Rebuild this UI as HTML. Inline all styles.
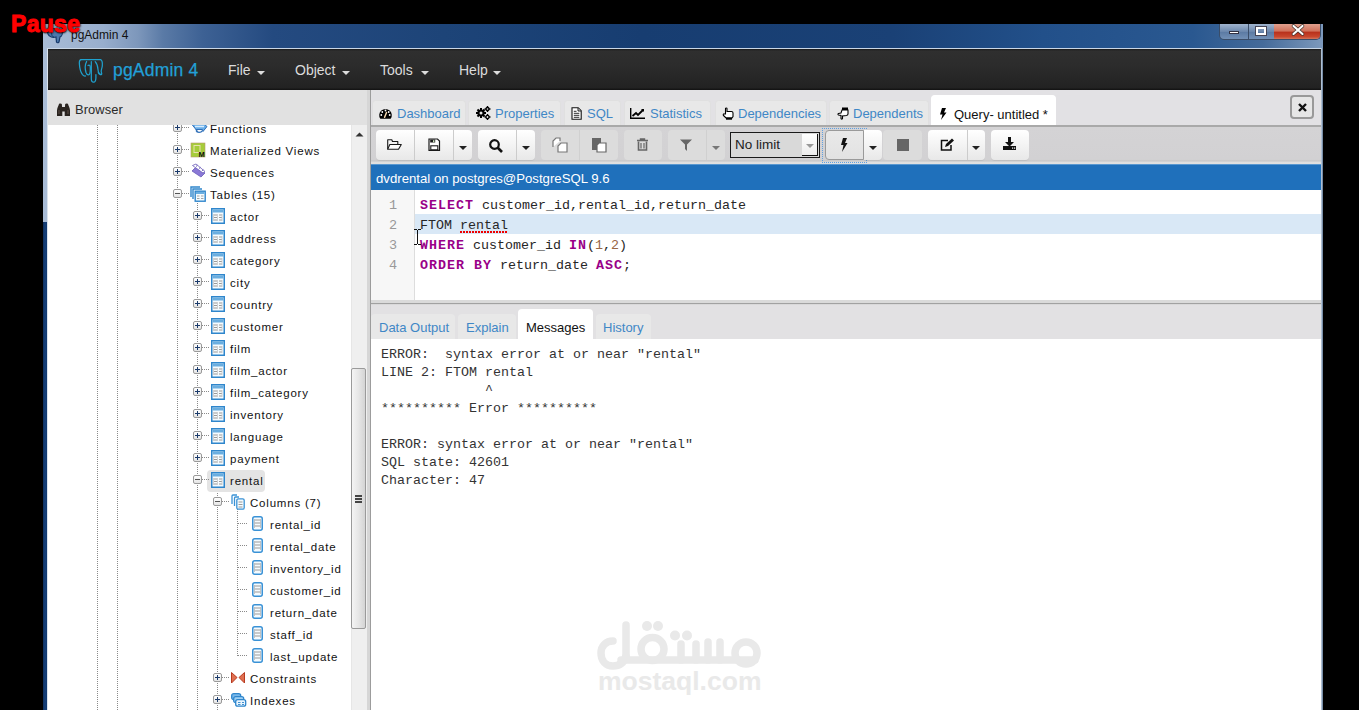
<!DOCTYPE html><html><head><meta charset="utf-8"><style>
*{box-sizing:border-box;margin:0;padding:0}
html,body{width:1359px;height:710px;overflow:hidden;background:#000;font-family:"Liberation Sans",sans-serif}
.a{position:absolute}
svg{position:absolute;overflow:visible}
#pause{left:11px;top:7px;font-size:23px;font-weight:bold;color:#f00;letter-spacing:0.3px;z-index:50;line-height:30px;transform:scaleY(1.08);transform-origin:0 0;-webkit-text-stroke:0.9px #f00;text-shadow:0 0 2px #000,0 0 2px #000,1px 1px 2px #000}
#win{left:43px;top:24px;width:1280px;height:700px;background:linear-gradient(90deg,#a9bcd6 0px,#98aecd 60px,#7d97bb 95px,#5a7aa6 120px,#3d6194 160px,#244a80 230px,#1d4478 400px,#173d71 600px,#1a4176 850px,#22508a 1000px,#2a5890 1150px,#456b9a 1220px,#7d99bc 1280px)}
#wtitle{left:71px;top:28px;font-size:12px;color:#111;line-height:14px}
#inner{left:47px;top:48px;width:1276px;height:662px;background:#e0e0e0;border-left:1px solid #dbe4ee;border-top:1px solid #c9d6e6}
#nav{left:48px;top:49px;width:1273px;height:41px;background:linear-gradient(#1a1a1a 0,#2f2f2f 2px,#2c2c2c 40%,#222 94%,#111 100%)}
.menu{top:62px;font-size:14px;color:#dcdcdc;line-height:16px}
.caret{width:0;height:0;border-left:4px solid transparent;border-right:4px solid transparent;border-top:4px solid #dcdcdc}
#brand{left:113px;top:60px;font-size:17.5px;color:#22a0d8;line-height:20px;letter-spacing:0.2px;-webkit-text-stroke:0.25px #22a0d8}
#bhead{left:48px;top:90px;width:320px;height:35px;background:#e1e1e1}
#btxt{left:75px;top:102px;font-size:12.9px;color:#2a2a2a;line-height:15px;letter-spacing:0.1px}
#tree{left:48px;top:125px;width:303px;height:585px;background:#fff;overflow:hidden}
#sb{left:351px;top:125px;width:16px;height:585px;background:#efefef;border-left:1px solid #e6e6e6}
#psep{left:367px;top:90px;width:4px;height:620px;background:#d6d6d6}
#psep2{left:370px;top:90px;width:1px;height:620px;background:#9c9c9c}
#tabbar{left:371px;top:90px;width:950px;height:35px;background:#e2e1e4}
#tbline{left:371px;top:125px;width:950px;height:2px;background:#a9a9a9}
#toolbar{left:371px;top:127px;width:950px;height:36px;background:linear-gradient(#d4d3d5,#d2d1d3 90%,#c9c9c9 94%,#e6e6e6)}
#bluebar{left:371px;top:164px;width:950px;height:26px;background:#1f70bb;border-top:1px solid #5a98d0}
#bluetxt{left:376px;top:171px;font-size:13.2px;color:#fff;line-height:15px}
#editor{left:371px;top:190px;width:950px;height:110px;background:#fff}
#gutter{left:371px;top:190px;width:44px;height:110px;background:#f7f7f7;border-right:1px solid #ddd}
#splitter{left:371px;top:300px;width:950px;height:5px;background:linear-gradient(#dadada 0,#dadada 3px,#9a9a9a 3px,#a8a8a8 4px,#d0d0d0 4px,#e2e1e3 5px)}
#otabbar{left:371px;top:305px;width:950px;height:34px;background:#e2e1e3}
#out{left:371px;top:339px;width:950px;height:371px;background:#fff}
#wframeR{left:1321px;top:48px;width:2px;height:662px;background:linear-gradient(90deg,#c8d6e6,#5d7592)}
.tab{position:absolute;top:100px;height:25px;background:#e8e8e8;border-radius:4px 4px 0 0;border:1px solid #e0e0e0;border-bottom:none}
.tabt{position:absolute;top:106px;font-size:13px;color:#3f87c6;line-height:15px;white-space:nowrap}
.ln{position:absolute;left:371px;width:26px;text-align:right;font-family:"Liberation Mono",monospace;font-size:13.5px;color:#999;line-height:20px;height:20px}
.cl{position:absolute;left:420px;font-family:"Liberation Mono",monospace;font-size:13.33px;color:#262626;line-height:20px;height:20px;white-space:pre}
.kw{color:#908;font-weight:bold;letter-spacing:1px}
.nm{color:#964}
#hl{left:415px;top:214px;width:906px;height:20px;background:#d9e8f6}
.msg{position:absolute;left:381px;margin-top:1px;font-family:"Liberation Mono",monospace;font-size:13.33px;color:#333;line-height:18px;white-space:pre}
#squig{left:460px;top:231px;width:47px;height:2px;background-image:repeating-linear-gradient(90deg,#e00 0 2px,transparent 2px 3px)}
.btn{position:absolute;top:130px;height:30px;border-radius:4px;background:linear-gradient(#ffffff,#e8e8e8);box-shadow:0 1px 0 rgba(0,0,0,0.06)}
.btnd{position:absolute;top:130px;height:30px;border-radius:4px;background:#dcdcdc}
.div{position:absolute;top:130px;width:1px;height:30px;background:#cfcfcf}
.tc{position:absolute;width:0;height:0;border-left:4px solid transparent;border-right:4px solid transparent;border-top:4px solid #222}
.tr{position:absolute;font-size:11.5px;letter-spacing:0.8px;color:#111;line-height:14px;white-space:nowrap}
.vd{position:absolute;width:1px;background-image:repeating-linear-gradient(180deg,#8a8a8a 0 1px,transparent 1px 2px)}
.hd{position:absolute;height:1px;background-image:repeating-linear-gradient(90deg,#8a8a8a 0 1px,transparent 1px 2px)}
.exp{position:absolute;width:9px;height:9px;border:1px solid #9a9a9a;border-radius:2px;background:linear-gradient(#fff,#e4e4e4)}
.otab{position:absolute;top:314px;height:25px;background:#e8e8e8;border-radius:4px 4px 0 0}
.otabt{position:absolute;top:320px;font-size:13px;color:#3f87c6;line-height:15px;white-space:nowrap}
</style></head><body>
<div id="pause" class="a">Pause</div>
<div id="win" class="a"></div>
<svg style="left:45px;top:27px" width="20" height="18" viewBox="0 0 20 18"><path d="M2 3C4 1 15 1 17 3C18 6 17 9 15 10L14 15C13 16 12 16 11.5 15L11 10C8 11 4 10 3 7z" fill="#4d79ad" stroke="#17396a" stroke-width="1.2"/><path d="M7 4C6 7 7 10 9 10" fill="none" stroke="#17396a" stroke-width="1"/></svg>
<div id="wtitle" class="a">pgAdmin 4</div>
<div class="a" style="left:1219px;top:24px;width:102px;height:16px;border:1px solid #3a4d68;border-top:none;border-radius:0 0 5px 5px;background:linear-gradient(#9fb3cd,#6c88ad 50%,#5a79a2 51%,#7290b6);overflow:hidden"><div class="a" style="left:28px;top:0;width:1px;height:16px;background:#3a4d68"></div><div class="a" style="left:54px;top:0;width:56px;height:16px;background:linear-gradient(#e0a08e,#d0715a 45%,#b8301b 50%,#c8482e 80%,#d98c72)"></div><div class="a" style="left:9px;top:7px;width:10px;height:3px;background:#fff;border:1px solid #334;"></div><div class="a" style="left:36px;top:3px;width:10px;height:8px;border:2px solid #fff;outline:1px solid #445"></div></div>
<svg style="left:1292px;top:25px" width="12" height="10" viewBox="0 0 12 10"><path d="M1.5 1L10.5 9M10.5 1L1.5 9" stroke="#40302a" stroke-width="3.6" stroke-linecap="round"/><path d="M1.5 1L10.5 9M10.5 1L1.5 9" stroke="#fff" stroke-width="2.2" stroke-linecap="round"/></svg>
<div class="a" style="left:43px;top:222px;width:4px;height:488px;background:linear-gradient(90deg,#0f2f5c,#15407a 50%,#12376b)"></div>
<div class="a" style="left:47px;top:222px;width:1px;height:488px;background:#a3b8d2"></div>
<div id="inner" class="a"></div>
<div id="nav" class="a"></div>
<svg style="left:74px;top:55px" width="34" height="32" viewBox="0 0 34 32"><g fill="none" stroke="#1fa2cf" stroke-width="1.25" stroke-linecap="round" stroke-linejoin="round"><path d="M7 4.6C5.5 5 5.2 7 5.4 9C5.6 13 6.5 17 8.5 19.6C9.5 20.8 10.5 21.2 11.5 21"/><path d="M7 4.6H26.5C28 5 28.6 7.5 28.3 11C28 13.5 27 15 27.2 16.5C27.4 18 28.2 18.8 27.5 19.5C26.5 20.2 24.8 19 24.3 17.5"/><path d="M12.6 6.5C11.3 9 11 14 12 17.5C12.6 19.3 14 20 15 19.7C16.3 19.2 16.4 16 16.3 12C16.2 10 15 9.8 14 10.5"/><path d="M17.3 6.6V23.5C17.3 26 18.5 27.2 19.6 27.2C21 27.2 21.8 25.5 21.9 23V19.6"/><path d="M21.2 6.6C23 8.5 23.8 11.5 24 14.5C24.2 17 24.5 19 27 19.4"/></g></svg>
<div id="brand" class="a">pgAdmin 4</div>
<div class="a menu" style="left:228px">File</div><div class="a caret" style="left:257px;top:71px"></div>
<div class="a menu" style="left:295px">Object</div><div class="a caret" style="left:342px;top:71px"></div>
<div class="a menu" style="left:380px">Tools</div><div class="a caret" style="left:421px;top:71px"></div>
<div class="a menu" style="left:459px">Help</div><div class="a caret" style="left:493px;top:71px"></div>
<div id="bhead" class="a"></div>
<svg style="left:56px;top:102px" width="15" height="15" viewBox="0 0 15 15"><path d="M1 14V8.5C1 6 2.5 4 3 2C3.2 1.2 5.5 1.2 5.8 2L6.3 7.5V14z" fill="#2a2420"/><path d="M14 14V8.5C14 6 12.5 4 12 2C11.8 1.2 9.5 1.2 9.2 2L8.7 7.5V14z" fill="#2a2420"/><rect x="6" y="5" width="3" height="4.5" fill="#2a2420"/><path d="M3 8V12M12 8V12" stroke="#6a5a50" stroke-width="0.8"/></svg>
<div id="btxt" class="a">Browser</div>
<div id="tree" class="a"></div>
<div id="sb" class="a"></div>
<div id="psep" class="a"></div>
<div id="psep2" class="a"></div>
<div class="a" style="left:48px;top:125px;width:303px;height:585px;overflow:hidden">
<div class="vd" style="left:49px;top:0px;height:585px"></div>
<div class="vd" style="left:69px;top:0px;height:585px"></div>
<div class="vd" style="left:129px;top:0px;height:585px"></div>
<div class="vd" style="left:149px;top:68px;height:517px"></div>
<div class="vd" style="left:169px;top:354px;height:231px"></div>
<div class="vd" style="left:189px;top:376px;height:155px"></div>
<div class="a" style="left:159px;top:345px;width:58px;height:22px;background:#e4e4e4;border-radius:4px"></div>
<div class="hd" style="left:130px;top:2px;width:12px"></div>
<div class="exp" style="left:125px;top:-2px"></div>
<div class="a" style="left:127px;top:2px;width:5px;height:1px;background:#1a3a6a"></div>
<div class="a" style="left:129px;top:0px;width:1px;height:5px;background:#1a3a6a"></div>
<svg style="left:143px;top:-4px" width="17" height="14" viewBox="0 0 17 14"><path d="M1 3.5L5 1.5L5.5 3.5H13L11 1.5L16 5.5L12 10.5L11.5 8.5H5L6.5 10.5z" fill="#6aaee8" stroke="#2f6fb8" stroke-width="1"/><path d="M4 5.5H13" stroke="#d8ecff" stroke-width="1.5"/><path d="M5 9.5C6 12 10 12 11.5 9.5" fill="none" stroke="#2f6fb8" stroke-width="1.3"/></svg>
<div class="tr" style="left:162px;top:-3px">Functions</div>
<div class="hd" style="left:130px;top:24px;width:12px"></div>
<div class="exp" style="left:125px;top:20px"></div>
<div class="a" style="left:127px;top:24px;width:5px;height:1px;background:#1a3a6a"></div>
<div class="a" style="left:129px;top:22px;width:1px;height:5px;background:#1a3a6a"></div>
<svg style="left:143px;top:18px" width="14" height="14" viewBox="0 0 14 14"><rect x="0" y="0" width="14" height="14" fill="#a6cc3a" stroke="#b89a70" stroke-width="0.6"/><rect x="3" y="2.5" width="6" height="7" fill="none" stroke="#e8e0b0" stroke-width="1"/><text x="7.5" y="13.5" font-family="Liberation Sans" font-weight="bold" font-size="7.5" fill="#111">M</text></svg>
<div class="tr" style="left:162px;top:19px">Materialized Views</div>
<div class="hd" style="left:130px;top:46px;width:12px"></div>
<div class="exp" style="left:125px;top:42px"></div>
<div class="a" style="left:127px;top:46px;width:5px;height:1px;background:#1a3a6a"></div>
<div class="a" style="left:129px;top:44px;width:1px;height:5px;background:#1a3a6a"></div>
<svg style="left:143px;top:39px" width="15" height="15" viewBox="0 0 15 15"><path d="M1 7L5 3L14 9L10 13z" fill="#8a78d6" stroke="#6a5cb8" stroke-width="0.8"/><path d="M1.5 1.5L5 0L14 7.5L12 9z" fill="#fff" stroke="#6a5cb8" stroke-width="0.8"/><path d="M5 2.5L6.5 1.2M8 4.5L9.5 3.3M11 6.8L12.3 5.6" stroke="#6a5cb8" stroke-width="1"/></svg>
<div class="tr" style="left:162px;top:41px">Sequences</div>
<div class="hd" style="left:130px;top:68px;width:12px"></div>
<div class="exp" style="left:125px;top:64px"></div>
<div class="a" style="left:127px;top:68px;width:5px;height:1px;background:#555"></div>
<svg style="left:142px;top:61px" width="16" height="16" viewBox="0 0 16 16"><path d="M1 11V1H10" fill="none" stroke="#2f86cc" stroke-width="1.4"/><path d="M3 13V3H12" fill="none" stroke="#2f86cc" stroke-width="1.4"/><rect x="5.2" y="5.2" width="10" height="10" fill="#f4fbff" stroke="#2f86cc" stroke-width="1.4"/><rect x="6" y="6" width="8.5" height="2" fill="#6aaee0"/><path d="M7 10H9.5M11 10H13.5M7 12.5H9.5M11 12.5H13.5" stroke="#9a9a9a" stroke-width="0.9"/></svg>
<div class="tr" style="left:162px;top:63px">Tables (15)</div>
<div class="hd" style="left:150px;top:90px;width:12px"></div>
<div class="exp" style="left:145px;top:86px"></div>
<div class="a" style="left:147px;top:90px;width:5px;height:1px;background:#1a3a6a"></div>
<div class="a" style="left:149px;top:88px;width:1px;height:5px;background:#1a3a6a"></div>
<svg style="left:163px;top:83px" width="14" height="16" viewBox="0 0 14 16"><rect x="0.75" y="0.75" width="12.5" height="14.5" fill="#f4fbff" stroke="#2f86cc" stroke-width="1.5"/><rect x="1.5" y="1.5" width="11" height="3" fill="#6aaee0"/><path d="M3 7H6M3 9.5H6M3 12H6M8 7H11M8 9.5H11M8 12H11" stroke="#9a9a9a" stroke-width="1"/><path d="M6.5 6V13M11 6V13M2.5 6V13" stroke="#c6c6c6" stroke-width="0.8"/></svg>
<div class="tr" style="left:182px;top:85px">actor</div>
<div class="hd" style="left:150px;top:112px;width:12px"></div>
<div class="exp" style="left:145px;top:108px"></div>
<div class="a" style="left:147px;top:112px;width:5px;height:1px;background:#1a3a6a"></div>
<div class="a" style="left:149px;top:110px;width:1px;height:5px;background:#1a3a6a"></div>
<svg style="left:163px;top:105px" width="14" height="16" viewBox="0 0 14 16"><rect x="0.75" y="0.75" width="12.5" height="14.5" fill="#f4fbff" stroke="#2f86cc" stroke-width="1.5"/><rect x="1.5" y="1.5" width="11" height="3" fill="#6aaee0"/><path d="M3 7H6M3 9.5H6M3 12H6M8 7H11M8 9.5H11M8 12H11" stroke="#9a9a9a" stroke-width="1"/><path d="M6.5 6V13M11 6V13M2.5 6V13" stroke="#c6c6c6" stroke-width="0.8"/></svg>
<div class="tr" style="left:182px;top:107px">address</div>
<div class="hd" style="left:150px;top:134px;width:12px"></div>
<div class="exp" style="left:145px;top:130px"></div>
<div class="a" style="left:147px;top:134px;width:5px;height:1px;background:#1a3a6a"></div>
<div class="a" style="left:149px;top:132px;width:1px;height:5px;background:#1a3a6a"></div>
<svg style="left:163px;top:127px" width="14" height="16" viewBox="0 0 14 16"><rect x="0.75" y="0.75" width="12.5" height="14.5" fill="#f4fbff" stroke="#2f86cc" stroke-width="1.5"/><rect x="1.5" y="1.5" width="11" height="3" fill="#6aaee0"/><path d="M3 7H6M3 9.5H6M3 12H6M8 7H11M8 9.5H11M8 12H11" stroke="#9a9a9a" stroke-width="1"/><path d="M6.5 6V13M11 6V13M2.5 6V13" stroke="#c6c6c6" stroke-width="0.8"/></svg>
<div class="tr" style="left:182px;top:129px">category</div>
<div class="hd" style="left:150px;top:156px;width:12px"></div>
<div class="exp" style="left:145px;top:152px"></div>
<div class="a" style="left:147px;top:156px;width:5px;height:1px;background:#1a3a6a"></div>
<div class="a" style="left:149px;top:154px;width:1px;height:5px;background:#1a3a6a"></div>
<svg style="left:163px;top:149px" width="14" height="16" viewBox="0 0 14 16"><rect x="0.75" y="0.75" width="12.5" height="14.5" fill="#f4fbff" stroke="#2f86cc" stroke-width="1.5"/><rect x="1.5" y="1.5" width="11" height="3" fill="#6aaee0"/><path d="M3 7H6M3 9.5H6M3 12H6M8 7H11M8 9.5H11M8 12H11" stroke="#9a9a9a" stroke-width="1"/><path d="M6.5 6V13M11 6V13M2.5 6V13" stroke="#c6c6c6" stroke-width="0.8"/></svg>
<div class="tr" style="left:182px;top:151px">city</div>
<div class="hd" style="left:150px;top:178px;width:12px"></div>
<div class="exp" style="left:145px;top:174px"></div>
<div class="a" style="left:147px;top:178px;width:5px;height:1px;background:#1a3a6a"></div>
<div class="a" style="left:149px;top:176px;width:1px;height:5px;background:#1a3a6a"></div>
<svg style="left:163px;top:171px" width="14" height="16" viewBox="0 0 14 16"><rect x="0.75" y="0.75" width="12.5" height="14.5" fill="#f4fbff" stroke="#2f86cc" stroke-width="1.5"/><rect x="1.5" y="1.5" width="11" height="3" fill="#6aaee0"/><path d="M3 7H6M3 9.5H6M3 12H6M8 7H11M8 9.5H11M8 12H11" stroke="#9a9a9a" stroke-width="1"/><path d="M6.5 6V13M11 6V13M2.5 6V13" stroke="#c6c6c6" stroke-width="0.8"/></svg>
<div class="tr" style="left:182px;top:173px">country</div>
<div class="hd" style="left:150px;top:200px;width:12px"></div>
<div class="exp" style="left:145px;top:196px"></div>
<div class="a" style="left:147px;top:200px;width:5px;height:1px;background:#1a3a6a"></div>
<div class="a" style="left:149px;top:198px;width:1px;height:5px;background:#1a3a6a"></div>
<svg style="left:163px;top:193px" width="14" height="16" viewBox="0 0 14 16"><rect x="0.75" y="0.75" width="12.5" height="14.5" fill="#f4fbff" stroke="#2f86cc" stroke-width="1.5"/><rect x="1.5" y="1.5" width="11" height="3" fill="#6aaee0"/><path d="M3 7H6M3 9.5H6M3 12H6M8 7H11M8 9.5H11M8 12H11" stroke="#9a9a9a" stroke-width="1"/><path d="M6.5 6V13M11 6V13M2.5 6V13" stroke="#c6c6c6" stroke-width="0.8"/></svg>
<div class="tr" style="left:182px;top:195px">customer</div>
<div class="hd" style="left:150px;top:222px;width:12px"></div>
<div class="exp" style="left:145px;top:218px"></div>
<div class="a" style="left:147px;top:222px;width:5px;height:1px;background:#1a3a6a"></div>
<div class="a" style="left:149px;top:220px;width:1px;height:5px;background:#1a3a6a"></div>
<svg style="left:163px;top:215px" width="14" height="16" viewBox="0 0 14 16"><rect x="0.75" y="0.75" width="12.5" height="14.5" fill="#f4fbff" stroke="#2f86cc" stroke-width="1.5"/><rect x="1.5" y="1.5" width="11" height="3" fill="#6aaee0"/><path d="M3 7H6M3 9.5H6M3 12H6M8 7H11M8 9.5H11M8 12H11" stroke="#9a9a9a" stroke-width="1"/><path d="M6.5 6V13M11 6V13M2.5 6V13" stroke="#c6c6c6" stroke-width="0.8"/></svg>
<div class="tr" style="left:182px;top:217px">film</div>
<div class="hd" style="left:150px;top:244px;width:12px"></div>
<div class="exp" style="left:145px;top:240px"></div>
<div class="a" style="left:147px;top:244px;width:5px;height:1px;background:#1a3a6a"></div>
<div class="a" style="left:149px;top:242px;width:1px;height:5px;background:#1a3a6a"></div>
<svg style="left:163px;top:237px" width="14" height="16" viewBox="0 0 14 16"><rect x="0.75" y="0.75" width="12.5" height="14.5" fill="#f4fbff" stroke="#2f86cc" stroke-width="1.5"/><rect x="1.5" y="1.5" width="11" height="3" fill="#6aaee0"/><path d="M3 7H6M3 9.5H6M3 12H6M8 7H11M8 9.5H11M8 12H11" stroke="#9a9a9a" stroke-width="1"/><path d="M6.5 6V13M11 6V13M2.5 6V13" stroke="#c6c6c6" stroke-width="0.8"/></svg>
<div class="tr" style="left:182px;top:239px">film_actor</div>
<div class="hd" style="left:150px;top:266px;width:12px"></div>
<div class="exp" style="left:145px;top:262px"></div>
<div class="a" style="left:147px;top:266px;width:5px;height:1px;background:#1a3a6a"></div>
<div class="a" style="left:149px;top:264px;width:1px;height:5px;background:#1a3a6a"></div>
<svg style="left:163px;top:259px" width="14" height="16" viewBox="0 0 14 16"><rect x="0.75" y="0.75" width="12.5" height="14.5" fill="#f4fbff" stroke="#2f86cc" stroke-width="1.5"/><rect x="1.5" y="1.5" width="11" height="3" fill="#6aaee0"/><path d="M3 7H6M3 9.5H6M3 12H6M8 7H11M8 9.5H11M8 12H11" stroke="#9a9a9a" stroke-width="1"/><path d="M6.5 6V13M11 6V13M2.5 6V13" stroke="#c6c6c6" stroke-width="0.8"/></svg>
<div class="tr" style="left:182px;top:261px">film_category</div>
<div class="hd" style="left:150px;top:288px;width:12px"></div>
<div class="exp" style="left:145px;top:284px"></div>
<div class="a" style="left:147px;top:288px;width:5px;height:1px;background:#1a3a6a"></div>
<div class="a" style="left:149px;top:286px;width:1px;height:5px;background:#1a3a6a"></div>
<svg style="left:163px;top:281px" width="14" height="16" viewBox="0 0 14 16"><rect x="0.75" y="0.75" width="12.5" height="14.5" fill="#f4fbff" stroke="#2f86cc" stroke-width="1.5"/><rect x="1.5" y="1.5" width="11" height="3" fill="#6aaee0"/><path d="M3 7H6M3 9.5H6M3 12H6M8 7H11M8 9.5H11M8 12H11" stroke="#9a9a9a" stroke-width="1"/><path d="M6.5 6V13M11 6V13M2.5 6V13" stroke="#c6c6c6" stroke-width="0.8"/></svg>
<div class="tr" style="left:182px;top:283px">inventory</div>
<div class="hd" style="left:150px;top:310px;width:12px"></div>
<div class="exp" style="left:145px;top:306px"></div>
<div class="a" style="left:147px;top:310px;width:5px;height:1px;background:#1a3a6a"></div>
<div class="a" style="left:149px;top:308px;width:1px;height:5px;background:#1a3a6a"></div>
<svg style="left:163px;top:303px" width="14" height="16" viewBox="0 0 14 16"><rect x="0.75" y="0.75" width="12.5" height="14.5" fill="#f4fbff" stroke="#2f86cc" stroke-width="1.5"/><rect x="1.5" y="1.5" width="11" height="3" fill="#6aaee0"/><path d="M3 7H6M3 9.5H6M3 12H6M8 7H11M8 9.5H11M8 12H11" stroke="#9a9a9a" stroke-width="1"/><path d="M6.5 6V13M11 6V13M2.5 6V13" stroke="#c6c6c6" stroke-width="0.8"/></svg>
<div class="tr" style="left:182px;top:305px">language</div>
<div class="hd" style="left:150px;top:332px;width:12px"></div>
<div class="exp" style="left:145px;top:328px"></div>
<div class="a" style="left:147px;top:332px;width:5px;height:1px;background:#1a3a6a"></div>
<div class="a" style="left:149px;top:330px;width:1px;height:5px;background:#1a3a6a"></div>
<svg style="left:163px;top:325px" width="14" height="16" viewBox="0 0 14 16"><rect x="0.75" y="0.75" width="12.5" height="14.5" fill="#f4fbff" stroke="#2f86cc" stroke-width="1.5"/><rect x="1.5" y="1.5" width="11" height="3" fill="#6aaee0"/><path d="M3 7H6M3 9.5H6M3 12H6M8 7H11M8 9.5H11M8 12H11" stroke="#9a9a9a" stroke-width="1"/><path d="M6.5 6V13M11 6V13M2.5 6V13" stroke="#c6c6c6" stroke-width="0.8"/></svg>
<div class="tr" style="left:182px;top:327px">payment</div>
<div class="hd" style="left:150px;top:354px;width:12px"></div>
<div class="exp" style="left:145px;top:350px"></div>
<div class="a" style="left:147px;top:354px;width:5px;height:1px;background:#555"></div>
<svg style="left:163px;top:347px" width="14" height="16" viewBox="0 0 14 16"><rect x="0.75" y="0.75" width="12.5" height="14.5" fill="#f4fbff" stroke="#2f86cc" stroke-width="1.5"/><rect x="1.5" y="1.5" width="11" height="3" fill="#6aaee0"/><path d="M3 7H6M3 9.5H6M3 12H6M8 7H11M8 9.5H11M8 12H11" stroke="#9a9a9a" stroke-width="1"/><path d="M6.5 6V13M11 6V13M2.5 6V13" stroke="#c6c6c6" stroke-width="0.8"/></svg>
<div class="tr" style="left:182px;top:349px">rental</div>
<div class="hd" style="left:170px;top:376px;width:12px"></div>
<div class="exp" style="left:165px;top:372px"></div>
<div class="a" style="left:167px;top:376px;width:5px;height:1px;background:#555"></div>
<svg style="left:183px;top:369px" width="14" height="16" viewBox="0 0 14 16"><path d="M1 10V2C1 1.3 1.5 1 2 1H6" fill="none" stroke="#3a92d6" stroke-width="1.3"/><path d="M3.5 12V4C3.5 3.3 4 3 4.5 3H8" fill="none" stroke="#3a92d6" stroke-width="1.3"/><rect x="5.8" y="4.8" width="7.4" height="10.4" rx="1.5" fill="#f4fbff" stroke="#3a92d6" stroke-width="1.3"/><path d="M7.5 8H11.5M7.5 10.5H11.5M7.5 13H11.5" stroke="#9a9a9a" stroke-width="1"/></svg>
<div class="tr" style="left:202px;top:371px">Columns (7)</div>
<div class="hd" style="left:190px;top:398px;width:10px"></div>
<svg style="left:204px;top:391px" width="11" height="15" viewBox="0 0 11 15"><rect x="0.75" y="0.75" width="9.5" height="13.5" rx="2" fill="#f4fbff" stroke="#3a92d6" stroke-width="1.5"/><path d="M2.5 4H8.5M2.5 7H8.5M2.5 10H8.5" stroke="#9a9a9a" stroke-width="1.1"/><path d="M2.5 3V12M8.5 3V12" stroke="#b8b8b8" stroke-width="0.8"/></svg>
<div class="tr" style="left:222px;top:393px">rental_id</div>
<div class="hd" style="left:190px;top:420px;width:10px"></div>
<svg style="left:204px;top:413px" width="11" height="15" viewBox="0 0 11 15"><rect x="0.75" y="0.75" width="9.5" height="13.5" rx="2" fill="#f4fbff" stroke="#3a92d6" stroke-width="1.5"/><path d="M2.5 4H8.5M2.5 7H8.5M2.5 10H8.5" stroke="#9a9a9a" stroke-width="1.1"/><path d="M2.5 3V12M8.5 3V12" stroke="#b8b8b8" stroke-width="0.8"/></svg>
<div class="tr" style="left:222px;top:415px">rental_date</div>
<div class="hd" style="left:190px;top:442px;width:10px"></div>
<svg style="left:204px;top:435px" width="11" height="15" viewBox="0 0 11 15"><rect x="0.75" y="0.75" width="9.5" height="13.5" rx="2" fill="#f4fbff" stroke="#3a92d6" stroke-width="1.5"/><path d="M2.5 4H8.5M2.5 7H8.5M2.5 10H8.5" stroke="#9a9a9a" stroke-width="1.1"/><path d="M2.5 3V12M8.5 3V12" stroke="#b8b8b8" stroke-width="0.8"/></svg>
<div class="tr" style="left:222px;top:437px">inventory_id</div>
<div class="hd" style="left:190px;top:464px;width:10px"></div>
<svg style="left:204px;top:457px" width="11" height="15" viewBox="0 0 11 15"><rect x="0.75" y="0.75" width="9.5" height="13.5" rx="2" fill="#f4fbff" stroke="#3a92d6" stroke-width="1.5"/><path d="M2.5 4H8.5M2.5 7H8.5M2.5 10H8.5" stroke="#9a9a9a" stroke-width="1.1"/><path d="M2.5 3V12M8.5 3V12" stroke="#b8b8b8" stroke-width="0.8"/></svg>
<div class="tr" style="left:222px;top:459px">customer_id</div>
<div class="hd" style="left:190px;top:486px;width:10px"></div>
<svg style="left:204px;top:479px" width="11" height="15" viewBox="0 0 11 15"><rect x="0.75" y="0.75" width="9.5" height="13.5" rx="2" fill="#f4fbff" stroke="#3a92d6" stroke-width="1.5"/><path d="M2.5 4H8.5M2.5 7H8.5M2.5 10H8.5" stroke="#9a9a9a" stroke-width="1.1"/><path d="M2.5 3V12M8.5 3V12" stroke="#b8b8b8" stroke-width="0.8"/></svg>
<div class="tr" style="left:222px;top:481px">return_date</div>
<div class="hd" style="left:190px;top:508px;width:10px"></div>
<svg style="left:204px;top:501px" width="11" height="15" viewBox="0 0 11 15"><rect x="0.75" y="0.75" width="9.5" height="13.5" rx="2" fill="#f4fbff" stroke="#3a92d6" stroke-width="1.5"/><path d="M2.5 4H8.5M2.5 7H8.5M2.5 10H8.5" stroke="#9a9a9a" stroke-width="1.1"/><path d="M2.5 3V12M8.5 3V12" stroke="#b8b8b8" stroke-width="0.8"/></svg>
<div class="tr" style="left:222px;top:503px">staff_id</div>
<div class="hd" style="left:190px;top:530px;width:10px"></div>
<svg style="left:204px;top:523px" width="11" height="15" viewBox="0 0 11 15"><rect x="0.75" y="0.75" width="9.5" height="13.5" rx="2" fill="#f4fbff" stroke="#3a92d6" stroke-width="1.5"/><path d="M2.5 4H8.5M2.5 7H8.5M2.5 10H8.5" stroke="#9a9a9a" stroke-width="1.1"/><path d="M2.5 3V12M8.5 3V12" stroke="#b8b8b8" stroke-width="0.8"/></svg>
<div class="tr" style="left:222px;top:525px">last_update</div>
<div class="hd" style="left:170px;top:552px;width:12px"></div>
<div class="exp" style="left:165px;top:548px"></div>
<div class="a" style="left:167px;top:552px;width:5px;height:1px;background:#1a3a6a"></div>
<div class="a" style="left:169px;top:550px;width:1px;height:5px;background:#1a3a6a"></div>
<svg style="left:183px;top:547px" width="14" height="12" viewBox="0 0 14 12"><path d="M0.5 0.5L6 5.5L0.5 11z" fill="#e07050" stroke="#b83a20" stroke-width="1"/><path d="M13.5 0.5L8 5.5L13.5 11z" fill="#e07050" stroke="#b83a20" stroke-width="1"/></svg>
<div class="tr" style="left:202px;top:547px">Constraints</div>
<div class="hd" style="left:170px;top:574px;width:12px"></div>
<div class="exp" style="left:165px;top:570px"></div>
<div class="a" style="left:167px;top:574px;width:5px;height:1px;background:#1a3a6a"></div>
<div class="a" style="left:169px;top:572px;width:1px;height:5px;background:#1a3a6a"></div>
<svg style="left:183px;top:568px" width="15" height="14" viewBox="0 0 15 14"><rect x="0.7" y="0.7" width="9" height="6" rx="2" fill="#7ab8ea" stroke="#2f86cc" stroke-width="1.3"/><rect x="2.7" y="3.7" width="10" height="6" rx="2" fill="#9fd0f4" stroke="#2f86cc" stroke-width="1.3"/><rect x="4.7" y="6.7" width="10" height="6.5" rx="2" fill="#eaf6ff" stroke="#2f86cc" stroke-width="1.3"/><path d="M7 9.5H9.5M11 9.5H13M7 11.5H9.5M11 11.5H13" stroke="#2f86cc" stroke-width="0.9"/></svg>
<div class="tr" style="left:202px;top:569px">Indexes</div>
</div>
<svg style="left:355px;top:131px" width="9" height="6" viewBox="0 0 9 6"><path d="M0.5 5.5L4.5 1.5L8.5 5.5z" fill="#333"/></svg>
<div class="a" style="left:351px;top:368px;width:15px;height:261px;border:1px solid #9a9a9a;border-radius:2px;background:linear-gradient(90deg,#f4f4f4,#e6e6e6 50%,#d4d4d4)"></div>
<div class="a" style="left:355px;top:495px;width:7px;height:1.5px;background:#444"></div>
<div class="a" style="left:355px;top:498px;width:7px;height:1.5px;background:#444"></div>
<div class="a" style="left:355px;top:501px;width:7px;height:1.5px;background:#444"></div>
<div id="tabbar" class="a"></div>
<div id="tbline" class="a"></div>
<div id="toolbar" class="a"></div>
<div id="bluebar" class="a"></div>
<div id="bluetxt" class="a">dvdrental on postgres@PostgreSQL 9.6</div>
<div id="editor" class="a"></div>
<div id="gutter" class="a"></div>
<div id="splitter" class="a"></div>
<div id="otabbar" class="a"></div>
<div id="out" class="a"></div>
<div id="wframeR" class="a"></div>
<div class="tab" style="left:372px;width:94px"></div>
<div class="tab" style="left:468px;width:93px"></div>
<div class="tab" style="left:564px;width:57px"></div>
<div class="tab" style="left:624px;width:87px"></div>
<div class="tab" style="left:715px;width:112px"></div>
<div class="tab" style="left:829px;width:100px"></div>
<div class="tab" style="left:931px;width:125px;top:95px;height:30px;background:#fff;border-color:#fff"></div>
<svg style="left:379px;top:108px" width="13" height="11" viewBox="0 0 13 11"><path d="M1.3 10.8A6.3 6.3 0 1 1 11.7 10.8z" fill="#000"/><circle cx="6.5" cy="2.5" r="0.9" fill="#fff"/><circle cx="3.3" cy="4" r="0.9" fill="#fff"/><circle cx="9.7" cy="4" r="0.9" fill="#fff"/><circle cx="2.3" cy="7" r="0.9" fill="#fff"/><circle cx="10.7" cy="7" r="0.9" fill="#fff"/><path d="M5.6 9.3L7.5 4.5" stroke="#f3d8b0" stroke-width="1.5" stroke-linecap="round"/></svg>
<div class="tabt" style="left:397px">Dashboard</div>
<svg style="left:476px;top:106px" width="15" height="14" viewBox="0 0 15 14"><g fill="#000"><circle cx="5" cy="7" r="3.6"/><rect x="4" y="2" width="2" height="10"/><rect x="0" y="6" width="10" height="2"/><rect x="4" y="2" width="2" height="10" transform="rotate(45 5 7)"/><rect x="4" y="2" width="2" height="10" transform="rotate(-45 5 7)"/><circle cx="11.5" cy="3" r="2.2"/><rect x="10.8" y="0" width="1.4" height="6"/><rect x="8.5" y="2.3" width="6" height="1.4"/><circle cx="11.5" cy="11" r="2.2"/><rect x="10.8" y="8" width="1.4" height="6"/><rect x="8.5" y="10.3" width="6" height="1.4"/></g><circle cx="5" cy="7" r="1.5" fill="#e8e8e8"/><circle cx="11.5" cy="3" r="0.8" fill="#e8e8e8"/><circle cx="11.5" cy="11" r="0.9" fill="#e8e8e8"/></svg>
<div class="tabt" style="left:495px">Properties</div>
<svg style="left:571px;top:107px" width="11" height="13" viewBox="0 0 11 13"><path d="M1 0.8H7.2L10.2 3.8V12.2H1z" fill="#fff" stroke="#111" stroke-width="1.1"/><path d="M7 1V4H10" fill="#ddd" stroke="#111" stroke-width="0.9"/><path d="M2.8 6.3H8.3M2.8 8.3H8.3M2.8 10.3H8.3M2.8 4.3H5.5" stroke="#111" stroke-width="0.9"/></svg>
<div class="tabt" style="left:587px">SQL</div>
<svg style="left:630px;top:108px" width="15" height="11" viewBox="0 0 15 11"><path d="M0.7 0V10.3H15" fill="none" stroke="#000" stroke-width="1.4"/><path d="M2.5 8L6 5L8 7L13 2" fill="none" stroke="#000" stroke-width="1.8"/><path d="M11 1H14V4z" fill="#000"/></svg>
<div class="tabt" style="left:650px">Statistics</div>
<svg style="left:722px;top:107px" width="12" height="13" viewBox="0 0 12 13"><path d="M3.5 7V1.5C3.5 0.8 5 0.8 5 1.5V4.5H9.5C10.5 4.5 11 5 11 6V9.5L10 11H4L1.5 8.5C0.8 7.8 1.5 6.5 2.5 7z" fill="#fff" stroke="#000" stroke-width="1.1"/><rect x="4" y="10.5" width="6" height="2.2" fill="#000"/></svg>
<div class="tabt" style="left:738px">Dependencies</div>
<svg style="left:837px;top:107px" width="12" height="13" viewBox="0 0 12 13"><path d="M4 6L1.5 6.5C0.8 6.8 0.8 7.8 1.5 8L4 8.5V11.5C4 12.3 5.5 12.3 5.5 11.5V9L9.5 8.5C10.5 8.3 11 7.5 11 7V3H5z" fill="#fff" stroke="#000" stroke-width="1.1"/><rect x="5" y="0.5" width="6" height="2.5" fill="#000"/></svg>
<div class="tabt" style="left:853px">Dependents</div>
<svg style="left:939px;top:108px" width="8" height="12" viewBox="0 0 8 12"><path d="M3 0H7L5 4.5H7.5L2 12L3.5 6.5H1z" fill="#000"/></svg>
<div class="tabt" style="left:954px;top:107px;color:#111">Query- untitled *</div>
<div class="a" style="left:1290px;top:95px;width:24px;height:24px;border:2px solid #999;border-radius:4px;background:#e6e6e6"></div>
<svg style="left:1298px;top:103px" width="9" height="9" viewBox="0 0 9 9"><path d="M1 1L8 8M8 1L1 8" stroke="#111" stroke-width="2.4"/></svg>
<div class="btn" style="left:376px;width:96px"></div>
<div class="div" style="left:414px;background:#cccccc"></div>
<div class="div" style="left:453px;background:#cccccc"></div>
<div class="btn" style="left:478px;width:57px"></div>
<div class="div" style="left:516px;background:#cccccc"></div>
<div class="btnd" style="left:541px;width:77px"></div>
<div class="div" style="left:579px;background:#d0d0d0"></div>
<div class="btnd" style="left:624px;width:38px"></div>
<div class="btnd" style="left:668px;width:57px"></div>
<div class="div" style="left:706px;background:#d0d0d0"></div>
<div class="btnd" style="left:883px;width:39px"></div>
<div class="btn" style="left:928px;width:57px"></div>
<div class="div" style="left:967px;background:#cccccc"></div>
<div class="btn" style="left:991px;width:38px"></div>
<div class="a" style="left:822px;top:128px;width:45px;height:35px;border:1px dotted #5fa0e0"></div>
<div class="a" style="left:825px;top:130px;width:39px;height:30px;border:1px solid #9a9a9a;border-radius:4px 0 0 4px;background:linear-gradient(#e9e9e9,#e2e2e2)"></div>
<div class="btn" style="left:864px;width:18px;border-radius:0 4px 4px 0"></div>
<div class="a" style="left:730px;top:132px;width:90px;height:26px;border:1px solid #1a1a1a;background:#d9d9d9"></div>
<div class="a" style="left:735px;top:137px;font-size:13.5px;color:#222;line-height:16px">No limit</div>
<div class="a" style="left:802px;top:134px;width:16px;height:22px;background:linear-gradient(#fff,#ececec);border-right:1px solid #111;border-bottom:1px solid #111"></div>
<div class="tc" style="left:806px;top:144px;border-top-color:#999"></div>
<svg style="left:386px;top:138px" width="17" height="13" viewBox="0 0 17 13"><path d="M1.7 11.3V1.7H5.8L6.5 3.5H11.8V6" fill="none" stroke="#1a1a1a" stroke-width="1.1" stroke-linejoin="round"/><path d="M1.7 11.3L3.8 6.5H15.3L12.5 11.3z" fill="#fff" stroke="#1a1a1a" stroke-width="1.1" stroke-linejoin="round"/></svg>
<svg style="left:428px;top:138px" width="13" height="14" viewBox="0 0 13 14"><path d="M1 1H9.5L11.5 3V12.3H1z" fill="#fff" stroke="#1a1a1a" stroke-width="1.2"/><rect x="2.2" y="1.5" width="5" height="3" fill="#1a1a1a"/><rect x="5" y="2.2" width="1.4" height="2" fill="#cfe8c0"/><rect x="2.8" y="7.8" width="7" height="4" fill="#fff" stroke="#1a1a1a" stroke-width="1.1"/></svg>
<div class="tc" style="left:459px;top:146px"></div>
<svg style="left:489px;top:139px" width="14" height="14" viewBox="0 0 14 14"><circle cx="5.5" cy="5.5" r="4.3" fill="none" stroke="#111" stroke-width="2.2"/><path d="M8.5 8.5L13 13" stroke="#111" stroke-width="2.6"/></svg>
<div class="tc" style="left:522px;top:146px"></div>
<svg style="left:552px;top:137px" width="16" height="16" viewBox="0 0 16 16"><path d="M1 10V4L4 1H8V4" fill="#fff" stroke="#777" stroke-width="1.2"/><path d="M6 15V9L9 6H15V15z" fill="#fff" stroke="#777" stroke-width="1.2"/></svg>
<svg style="left:591px;top:137px" width="16" height="16" viewBox="0 0 16 16"><rect x="1" y="1" width="9" height="12" fill="#666"/><path d="M6 15V8L8 6H15V15z" fill="#fff" stroke="#666" stroke-width="1.2"/></svg>
<svg style="left:637px;top:138px" width="11" height="13" viewBox="0 0 11 13"><path d="M0 2.5H11M3.5 2.5V1H7.5V2.5" fill="none" stroke="#666" stroke-width="1.4"/><path d="M1.5 3.5V12H9.5V3.5" fill="none" stroke="#666" stroke-width="1.6"/><path d="M4 5V10.5M7 5V10.5" stroke="#666" stroke-width="1.2"/></svg>
<svg style="left:680px;top:139px" width="12" height="12" viewBox="0 0 12 12"><path d="M0 0.5H12L7 5.5V12L5 10V5.5z" fill="#666"/></svg>
<div class="tc" style="left:712px;top:146px;border-top-color:#777"></div>
<svg style="left:840px;top:138px" width="8" height="14" viewBox="0 0 8 14"><path d="M3 0H7L5 5H7.5L2 14L3.5 7H1z" fill="#111"/></svg>
<div class="tc" style="left:869px;top:146px"></div>
<div class="a" style="left:897px;top:139px;width:12px;height:12px;background:#666"></div>
<svg style="left:940px;top:138px" width="15" height="13" viewBox="0 0 15 13"><path d="M8 2.5H1.5V12H11V7" fill="none" stroke="#111" stroke-width="1.5"/><path d="M5 9L6 6L12 0.5L14 2.5L8 8z" fill="#111"/></svg>
<div class="tc" style="left:972px;top:146px"></div>
<svg style="left:1002px;top:137px" width="15" height="14" viewBox="0 0 15 14"><path d="M6 0H9V5H12L7.5 9.5L3 5H6z" fill="#111"/><rect x="1" y="9" width="13" height="4" fill="#111"/><rect x="10" y="10.5" width="1.2" height="1.2" fill="#fff"/><rect x="12" y="10.5" width="1.2" height="1.2" fill="#fff"/></svg>
<div class="otab" style="left:371px;width:84px"></div>
<div class="otabt" style="left:379px">Data Output</div>
<div class="otab" style="left:458px;width:58px"></div>
<div class="otabt" style="left:466px">Explain</div>
<div class="otab" style="left:518px;width:75px;top:309px;height:30px;background:#fff"></div>
<div class="otabt" style="left:526px;color:#111">Messages</div>
<div class="otab" style="left:596px;width:55px"></div>
<div class="otabt" style="left:603px">History</div>
<svg style="left:595px;top:618px" width="170" height="82" viewBox="0 0 170 82"><g fill="none" stroke="#e9e9e9" stroke-linecap="round" stroke-width="7.5"><path d="M31 7V40"/><path d="M31 38C29 45 24 48 18 48C10 48 6 42 6 35C6 28 11 23 18 23"/><circle cx="57.5" cy="31" r="11.5"/><path d="M26 42H160"/><path d="M86 26V42M101 26V42M113 24V42M125 24V42"/><circle cx="151" cy="35" r="11"/></g><g fill="#e9e9e9"><circle cx="52" cy="8" r="5"/><circle cx="63" cy="8" r="5"/><circle cx="80" cy="17.5" r="5"/><circle cx="92" cy="17.5" r="5"/></g><text x="3" y="72" font-family="Liberation Sans" font-weight="bold" font-size="26.5" fill="#e9e9e9">mostaql.com</text></svg>
<div id="hl" class="a"></div>
<div class="ln" style="top:196px">1</div>
<div class="ln" style="top:216px">2</div>
<div class="ln" style="top:236px">3</div>
<div class="ln" style="top:256px">4</div>
<div class="cl" style="top:196px"><span class="kw">SELECT</span> customer_id,rental_id,return_date</div>
<div class="cl" style="top:216px">FTOM rental</div>
<div id="squig" class="a"></div>
<div class="cl" style="top:236px"><span class="kw">WHERE</span> customer_id <span class="kw">IN</span>(<span class="nm">1</span>,<span class="nm">2</span>)</div>
<div class="cl" style="top:256px"><span class="kw">ORDER BY</span> return_date <span class="kw">ASC</span>;</div>
<div class="msg" style="top:345px">ERROR:  syntax error at or near "rental"
LINE 2: FTOM rental
             ^
********** Error **********

ERROR: syntax error at or near "rental"
SQL state: 42601
Character: 47</div>
<div class="a" style="left:414px;top:229px;width:3px;height:1px;background:#111"></div><div class="a" style="left:418px;top:229px;width:3px;height:1px;background:#111"></div><div class="a" style="left:417px;top:230px;width:1px;height:14px;background:#111"></div><div class="a" style="left:414px;top:244px;width:3px;height:1px;background:#111"></div><div class="a" style="left:418px;top:244px;width:3px;height:1px;background:#111"></div>
</body></html>
